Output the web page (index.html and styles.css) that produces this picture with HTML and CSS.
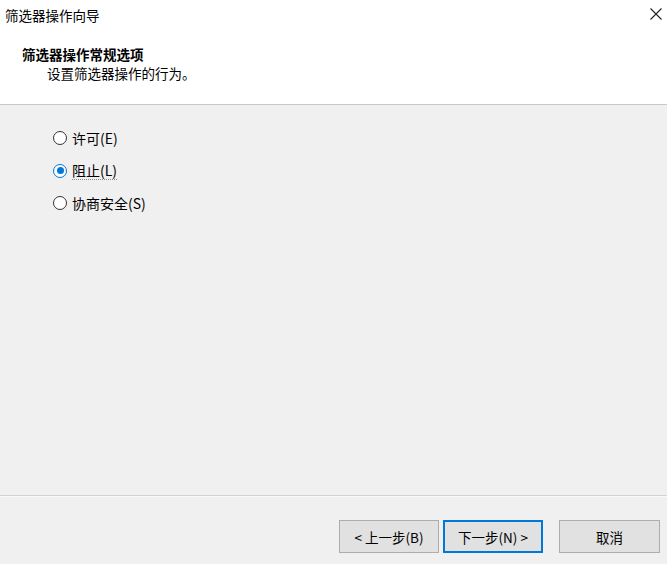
FILE: index.html
```html
<!DOCTYPE html>
<html lang="zh-CN">
<head>
<meta charset="utf-8">
<title>筛选器操作向导</title>
<link rel="stylesheet" href="styles.css">
</head>
<body>
<div class="window">
  <div class="top">
    <div class="titlebar">
      <span class="title">筛选器操作向导</span>
      <svg class="close" width="12" height="12" viewBox="0 0 12 12"><path d="M0.5 0.5 L11.5 11.5 M11.5 0.5 L0.5 11.5" stroke="#222" stroke-width="1.1" fill="none"/></svg>
    </div>
    <div class="header">
      <div class="h-title">筛选器操作常规选项</div>
      <div class="h-sub">设置筛选器操作的行为。</div>
    </div>
  </div>
  <div class="content">
    <div class="radio"><span class="circle"></span><span class="label">许可(E)</span></div>
    <div class="radio"><span class="circle checked"></span><span class="label focus">阻止(L)</span></div>
    <div class="radio"><span class="circle"></span><span class="label">协商安全(S)</span></div>
  </div>
  <div class="footer">
    <button class="btn">&lt; 上一步(B)</button>
    <button class="btn default">下一步(N) &gt;</button>
    <button class="btn cancel">取消</button>
  </div>
</div>
</body>
</html>
```

FILE: styles.css
```css
html, body {
  margin: 0;
  padding: 0;
}
body {
  background: #f0f0f0;
  font-family: "Noto Sans CJK SC", "Noto Sans", sans-serif;
  font-size: 13.5px;
  color: #000;
}
.window {
  width: 667px;
  height: 564px;
  display: flex;
  flex-direction: column;
  overflow: hidden;
}
.top {
  background: #fff;
  height: 104px;
  border-bottom: 1px solid #c9c9c9;
  box-sizing: content-box;
}
.titlebar {
  height: 30px;
  display: flex;
  align-items: center;
  padding: 0 5px;
}
.title {
  flex: 1;
  line-height: 30px;
}
.close {
  flex: none;
  margin-top: -3px;
}
.header {
  padding: 15px 0 0 22px;
}
.h-title {
  font-weight: bold;
  line-height: 19px;
}
.h-sub {
  line-height: 19px;
  margin-left: 25px;
}
.content {
  flex: 1;
  padding: 23px 0 0 53px;
  display: flex;
  flex-direction: column;
  gap: 12.5px;
  border-bottom: 1px solid #d2d2d2;
}
.radio {
  display: flex;
  align-items: center;
  height: 20px;
  gap: 5px;
  font-size: 14px;
}
.circle {
  width: 14px;
  height: 14px;
  box-sizing: border-box;
  border: 1px solid #333;
  border-radius: 50%;
  background: #fff;
  display: flex;
  align-items: center;
  justify-content: center;
}
.circle.checked {
  border-color: #0078d7;
}
.circle.checked::after {
  content: "";
  width: 7px;
  height: 7px;
  border-radius: 50%;
  background: #0078d7;
}
.label {
  line-height: 18px;
}
.label.focus {
  border-bottom: 1px dotted #888;
  line-height: 17px;
}
.footer {
  height: 68px;
  box-sizing: border-box;
  border-top: 1px solid #fafafa;
  padding: 23px 7px 0 339px;
  display: flex;
  align-items: flex-start;
}
.btn {
  width: 100px;
  height: 33px;
  box-sizing: border-box;
  background: #e1e1e1;
  border: 1px solid #adadad;
  font-family: "Noto Sans CJK SC", "Noto Sans", sans-serif;
  font-size: 13.5px;
  color: #000;
  padding: 0;
  margin: 0;
}
.btn.default {
  margin-left: 4px;
  border: 2px solid #0078d7;
}
.btn.cancel {
  margin-left: 16px;
  width: 101px;
}
```
